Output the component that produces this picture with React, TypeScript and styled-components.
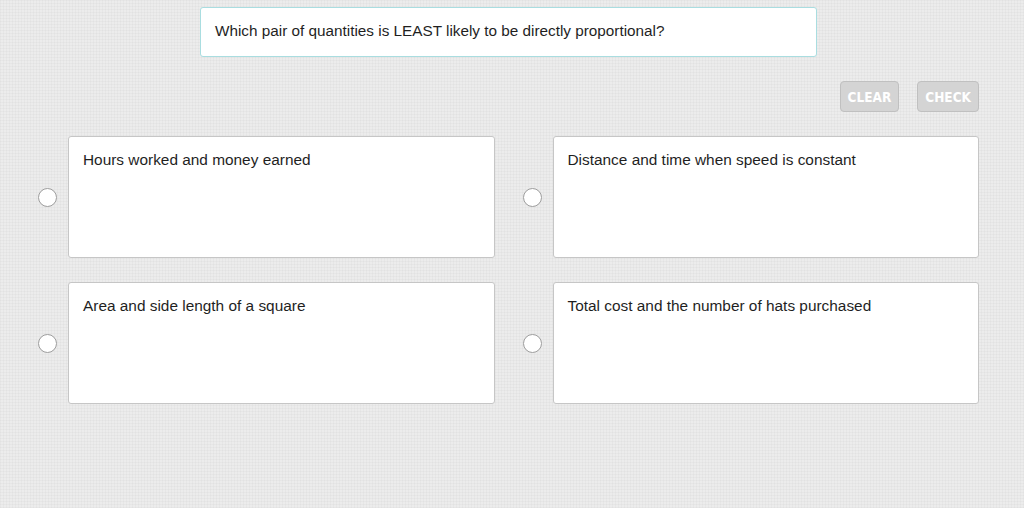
import React from "react";
import styled, { createGlobalStyle } from "styled-components";

const GlobalStyle = createGlobalStyle`
  html, body {
    margin: 0;
    padding: 0;
    height: 100%;
  }

  body {
    font-family: "Liberation Sans", Arial, sans-serif;
    color: #1f1f1f;
    background-color: #ececec;
    background-image:
      repeating-linear-gradient(0deg, rgba(0, 0, 0, 0.025) 0 1px, transparent 1px 3px),
      repeating-linear-gradient(90deg, rgba(0, 0, 0, 0.025) 0 1px, transparent 1px 3px);
  }
`;

const Page = styled.div`
  width: 941px;
  padding: 7px 0 0 38px;
  display: flex;
  flex-direction: column;
`;

const Question = styled.div`
  align-self: center;
  width: 617px;
  height: 50px;
  box-sizing: border-box;
  padding: 0 14px 2px;
  display: flex;
  align-items: center;

  background: #fff;
  border: 1px solid #a9dde0;
  border-radius: 3px;

  font-size: 15.3px;
  color: #1f1f1f;
`;

const Toolbar = styled.div`
  display: flex;
  justify-content: flex-end;
  gap: 18px;
  margin-top: 24px;
`;

const ActionButton = styled.button`
  height: 31px;
  padding: 0 7px;
  box-sizing: border-box;

  background: #d4d4d4;
  border: 1px solid #c0c0c0;
  border-radius: 4px;

  font-family: "DejaVu Sans Condensed", "DejaVu Sans", sans-serif;
  font-stretch: condensed;
  font-weight: bold;
  font-size: 13.5px;
  color: #ffffff;
  cursor: default;
`;

const Options = styled.div`
  display: grid;
  grid-template-columns: 1fr 1fr;
  column-gap: 28px;
  row-gap: 24px;
  margin-top: 24px;
`;

const Option = styled.label`
  display: flex;
  align-items: center;
  gap: 11px;
`;

const Radio = styled.span`
  flex: none;
  width: 19px;
  height: 19px;
  box-sizing: border-box;
  border-radius: 50%;
  background: #fff;
  border: 1px solid #9d9d9d;
`;

const Card = styled.div`
  flex: 1;
  height: 122px;
  box-sizing: border-box;
  padding: 14px 14px;

  background: #fff;
  border: 1px solid #c6c6c6;
  border-radius: 3px;

  font-size: 15.4px;
  line-height: 18px;
  color: #1f1f1f;
`;

const answers = [
  "Hours worked and money earned",
  "Distance and time when speed is constant",
  "Area and side length of a square",
  "Total cost and the number of hats purchased",
];

const App: React.FC = () => {
  return (
    <>
      <GlobalStyle />
      <Page>
        <Question>
          Which pair of quantities is LEAST likely to be directly proportional?
        </Question>

        <Toolbar>
          <ActionButton>CLEAR</ActionButton>
          <ActionButton>CHECK</ActionButton>
        </Toolbar>

        <Options>
          {answers.map((text) => (
            <Option key={text}>
              <Radio />
              <Card>{text}</Card>
            </Option>
          ))}
        </Options>
      </Page>
    </>
  );
};

export default App;
